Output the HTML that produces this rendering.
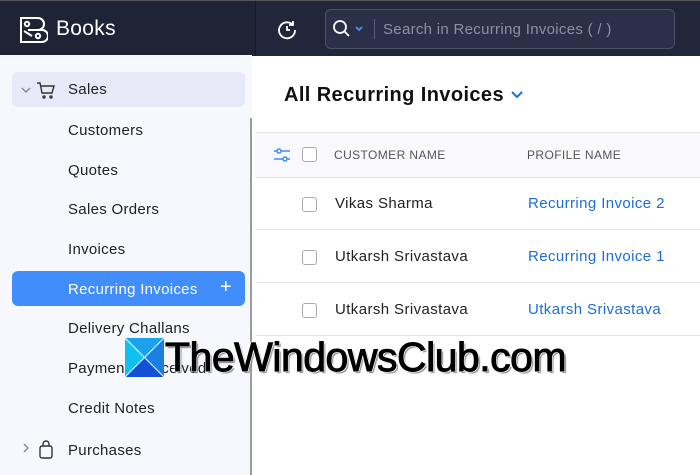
<!DOCTYPE html>
<html><head><style>
body{margin:0;width:700px;height:475px;overflow:hidden;font-family:"Liberation Sans",sans-serif;background:#fff;position:relative}
.hdr{position:absolute;left:0;top:0;width:700px;height:55px;background:#21263a;border-top:1px solid #555}
.hdr .l{position:absolute;left:0;top:0;width:255px;height:55px;background:#1e2336;border-right:1px solid #14182a}
.side{position:absolute;left:0;top:55px;width:252px;height:420px;background:#f7f7fe}
.sb{position:absolute;left:250px;top:118px;width:2px;height:357px;background:#9a9aa0}
.it{position:absolute;left:68px;font-size:15px;color:#222;letter-spacing:.3px}
.ln{position:absolute;left:255px;width:445px;height:1px;background:#e6e6ea}
.cell{position:absolute;font-size:15px;color:#222;letter-spacing:.4px}
.lnk{color:#1c6ed6}
.cb{position:absolute;width:13px;height:13px;border:1px solid #aaa;border-radius:3px;background:#fff}
.th{position:absolute;top:148px;font-size:12px;color:#555;letter-spacing:.4px}
</style></head><body>
<div class="hdr"><div class="l"></div>
<svg style="position:absolute;left:18px;top:14px" width="30" height="30" viewBox="0 0 30 30" fill="none" stroke="#fff" stroke-width="2"><path d="M3 3h17a6 6 0 0 1 0 12H10l14 0a5 5 0 0 1 0 12H3z"/><circle cx="9" cy="9" r="2.2"/><circle cx="20" cy="21" r="2.2"/><path d="M6 16l8 5"/></svg>
<div style="position:absolute;left:56px;top:16px;color:#fff;font-size:21px;letter-spacing:.3px">Books</div>
<svg style="position:absolute;left:277px;top:19px" width="20" height="20" viewBox="0 0 20 20" fill="none" stroke="#fff" stroke-width="1.8"><path d="M16 5A8 8 0 1 0 18 10"/><path d="M16 1v4h-4"/><path d="M10 6v4h3"/></svg>
<div style="position:absolute;left:325px;top:8px;width:348px;height:38px;border:1px solid #4a5068;border-radius:6px;background:#2a3047"></div>
<svg style="position:absolute;left:332px;top:19px" width="36" height="18" viewBox="0 0 36 18" fill="none" stroke="#fff" stroke-width="1.8"><circle cx="8" cy="7" r="6"/><path d="M12 11l5 5"/><path d="M24 7l3 3 3-3" stroke="#4c8ff5"/></svg>
<div style="position:absolute;left:374px;top:18px;width:1px;height:20px;background:#555c74"></div>
<div style="position:absolute;left:383px;top:20px;color:#8a90a6;font-size:15px;letter-spacing:.3px">Search in Recurring Invoices ( / )</div>
</div>
<div class="side"></div>
<div style="position:absolute;left:12px;top:72px;width:233px;height:35px;background:#e8e9f8;border-radius:6px"></div>
<svg style="position:absolute;left:20px;top:80px" width="50" height="20" viewBox="0 0 50 20" fill="none" stroke="#333" stroke-width="1.4"><path d="M2 8l4 4 4-4" stroke="#888"/><path d="M17 3h3l2 10h10l2-7H21"/><circle cx="24" cy="17" r="1"/><circle cx="31" cy="17" r="1"/></svg>
<div class="it" style="top:81px">Sales</div>
<div class="it" style="top:122px">Customers</div>
<div class="it" style="top:162px">Quotes</div>
<div class="it" style="top:201px">Sales Orders</div>
<div class="it" style="top:241px">Invoices</div>
<div style="position:absolute;left:12px;top:271px;width:233px;height:35px;background:#408dfb;border-radius:6px"></div>
<div class="it" style="top:281px;color:#fff">Recurring Invoices</div>
<div style="position:absolute;left:220px;top:276px;color:#fff;font-size:20px">+</div>
<div class="it" style="top:320px">Delivery Challans</div>
<div class="it" style="top:360px">Payments Received</div>
<div class="it" style="top:400px">Credit Notes</div>
<svg style="position:absolute;left:20px;top:440px" width="40" height="20" viewBox="0 0 40 20" fill="none" stroke="#333" stroke-width="1.4"><path d="M4 4l4 4-4 4" stroke="#888"/><rect x="20" y="6" width="12" height="12" rx="2"/><path d="M23 6V4a3 3 0 0 1 6 0v2"/></svg>
<div class="it" style="top:442px">Purchases</div>
<div class="sb"></div>
<div style="position:absolute;left:284px;top:84px;font-size:20px;font-weight:bold;color:#111;letter-spacing:.4px">All Recurring Invoices</div>
<svg style="position:absolute;left:510px;top:90px" width="14" height="10" viewBox="0 0 14 10" fill="none" stroke="#1c6ed6" stroke-width="2"><path d="M2 2l5 5 5-5"/></svg>
<div class="ln" style="top:132px"></div>
<div style="position:absolute;left:255px;top:133px;width:445px;height:44px;background:#f9f9fb"></div>
<svg style="position:absolute;left:273px;top:147px" width="18" height="16" viewBox="0 0 18 16" fill="none" stroke="#408dfb" stroke-width="1.5"><path d="M1 4h16M1 12h16"/><circle cx="6" cy="4" r="2" fill="#f9f9fb"/><circle cx="12" cy="12" r="2" fill="#f9f9fb"/></svg>
<div class="cb" style="left:302px;top:147px"></div>
<div class="th" style="left:334px">CUSTOMER NAME</div>
<div class="th" style="left:527px">PROFILE NAME</div>
<div class="ln" style="top:177px"></div>
<div class="cb" style="left:302px;top:197px"></div><div class="cell" style="left:335px;top:195px">Vikas Sharma</div><div class="cell lnk" style="left:528px;top:195px">Recurring Invoice 2</div>
<div class="ln" style="top:229px"></div>
<div class="cb" style="left:302px;top:250px"></div><div class="cell" style="left:335px;top:248px">Utkarsh Srivastava</div><div class="cell lnk" style="left:528px;top:248px">Recurring Invoice 1</div>
<div class="ln" style="top:282px"></div>
<div class="cb" style="left:302px;top:303px"></div><div class="cell" style="left:335px;top:301px">Utkarsh Srivastava</div><div class="cell lnk" style="left:528px;top:301px">Utkarsh Srivastava</div>
<div class="ln" style="top:335px"></div>
<svg style="position:absolute;left:125px;top:338px" width="39" height="39" viewBox="0 0 39 39"><polygon points="0,0 39,0 19.5,19.5" fill="#1aa3ec"/><polygon points="0,0 19.5,19.5 0,39" fill="#0fc0f0"/><polygon points="39,0 39,39 19.5,19.5" fill="#1a7fe0"/><polygon points="0,39 39,39 19.5,19.5" fill="#1450d6"/><path d="M0 0L39 39M39 0L0 39" stroke="#fff" stroke-width="1"/></svg>
<div style="position:absolute;left:165px;top:334px;font-size:41px;color:#000;letter-spacing:-0.5px;-webkit-text-stroke:1px #000;text-shadow:1px 1px 0 #fff,-1px -1px 0 #fff,1px -1px 0 #fff,-1px 1px 0 #fff,2px 2px 1px #888">TheWindowsClub.com</div>
</body></html>
